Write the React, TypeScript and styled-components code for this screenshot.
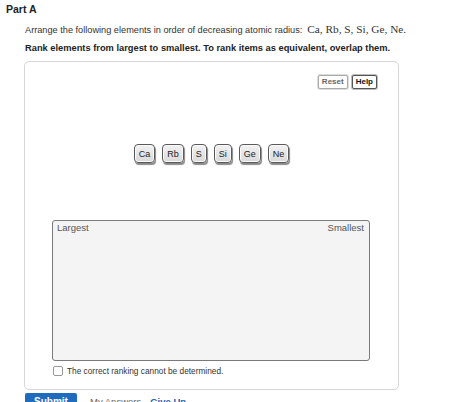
import React, { FC } from 'react';
import styled, { createGlobalStyle } from 'styled-components';

const GlobalStyle = createGlobalStyle`
  html, body {
    margin: 0;
    padding: 0;
    background: #ffffff;
  }
  body {
    font-family: "Liberation Sans", Arial, Helvetica, sans-serif;
    color: #222;
  }
`;

const elements = ['Ca', 'Rb', 'S', 'Si', 'Ge', 'Ne'];

const Page = styled.div`
  width: 474px;
  height: 402px;
  overflow: hidden;
  padding-top: 3px;
  box-sizing: border-box;
`;

const PartTitle = styled.div`
  margin-left: 6px;
  font-size: 10.5px;
  font-weight: bold;
  line-height: 12px;
  color: #222;
`;

const Prompt = styled.div`
  margin: 8px 0 0 25px;
  font-size: 9.2px;
  line-height: 13px;
  color: #333;
  white-space: nowrap;
`;

const Serif = styled.span`
  font-family: "Liberation Serif", "Times New Roman", serif;
  font-size: 11.3px;
  margin-left: 5px;
  color: #333;
`;

const Instruction = styled.div`
  margin: 5px 0 0 25px;
  font-size: 9.3px;
  font-weight: bold;
  line-height: 13px;
  color: #222;
  white-space: nowrap;
`;

const Panel = styled.div`
  margin: 6px 0 0 24px;
  width: 375px;
  height: 329px;
  box-sizing: border-box;
  border: 1px solid #d6d6d6;
  border-radius: 5px;
  display: flex;
  flex-direction: column;
`;

const Toolbar = styled.div`
  display: flex;
  justify-content: flex-end;
  gap: 4px;
  padding: 13px 21px 0 0;
`;

const ToolButton = styled.button<{ $strong?: boolean }>`
  height: 14px;
  padding: 0 3px;
  font-family: "Liberation Sans", Arial, sans-serif;
  font-size: 8px;
  font-weight: bold;
  line-height: 12px;
  color: ${(p) => (p.$strong ? '#111' : '#666')};
  background: #fff;
  border: 1px solid ${(p) => (p.$strong ? '#555' : '#aaa')};
  border-radius: 2px;
  box-shadow: 0 0 0 1px ${(p) => (p.$strong ? '#bbb' : '#ddd')};
`;

const TileRow = styled.div`
  display: flex;
  justify-content: center;
  gap: 7px;
  margin-top: 55px;
`;

const Tile = styled.div`
  height: 19px;
  min-width: 16px;
  padding: 0 4px;
  box-sizing: border-box;
  display: flex;
  align-items: center;
  justify-content: center;
  font-size: 9px;
  color: #222;
  background: linear-gradient(#f2f2f2, #d9d9d9);
  border: 1.5px solid #5a5a5a;
  border-radius: 4px;
  box-shadow: inset 0 0 0 1px #fafafa, 1px 2px 1px #8a8a8a;
`;

const RankBox = styled.div`
  margin: 57px 0 0 27px;
  width: 318px;
  height: 141px;
  box-sizing: border-box;
  background: #f4f4f4;
  border: 1.5px solid #7a7a7a;
  border-radius: 3px;
  display: flex;
  justify-content: space-between;
  align-items: flex-start;
  padding: 1px 5px 0 4px;
`;

const RankLabel = styled.span`
  font-size: 9.5px;
  line-height: 12px;
  color: #555;
`;

const CheckRow = styled.label`
  display: flex;
  align-items: center;
  gap: 4px;
  margin: 5px 0 0 28px;
  font-size: 8.3px;
  color: #333;
`;

const Box = styled.span`
  width: 8px;
  height: 8px;
  border: 1px solid #999;
  border-radius: 2px;
  background: #fff;
`;

const Footer = styled.div`
  display: flex;
  align-items: flex-start;
  margin: 3px 0 0 25px;
  gap: 13px;
`;

const SubmitButton = styled.button`
  width: 52px;
  height: 16px;
  padding: 1px 0 0;
  border: none;
  border-radius: 2px 2px 0 0;
  background: #1f6cbf;
  color: #fff;
  font-family: "Liberation Sans", Arial, sans-serif;
  font-size: 10px;
  font-weight: bold;
  line-height: 12px;
  text-align: center;
`;

const FooterLink = styled.span<{ $blue?: boolean }>`
  font-size: 9.5px;
  line-height: 12px;
  padding-top: 3px;
  font-weight: ${(p) => (p.$blue ? 'bold' : 'normal')};
  color: ${(p) => (p.$blue ? '#1f5fb0' : '#666')};
  margin-left: ${(p) => (p.$blue ? '-4px' : '0')};
`;

const App: FC = () => {
  return (
    <Page>
      <GlobalStyle />
      <PartTitle>Part A</PartTitle>
      <Prompt>
        Arrange the following elements in order of decreasing atomic radius:
        <Serif>Ca, Rb, S, Si, Ge, Ne.</Serif>
      </Prompt>
      <Instruction>
        Rank elements from largest to smallest. To rank items as equivalent, overlap them.
      </Instruction>
      <Panel>
        <Toolbar>
          <ToolButton>Reset</ToolButton>
          <ToolButton $strong>Help</ToolButton>
        </Toolbar>
        <TileRow>
          {elements.map((el) => (
            <Tile key={el}>{el}</Tile>
          ))}
        </TileRow>
        <RankBox>
          <RankLabel>Largest</RankLabel>
          <RankLabel>Smallest</RankLabel>
        </RankBox>
        <CheckRow>
          <Box />
          The correct ranking cannot be determined.
        </CheckRow>
      </Panel>
      <Footer>
        <SubmitButton>Submit</SubmitButton>
        <FooterLink>My Answers</FooterLink>
        <FooterLink $blue>Give Up</FooterLink>
      </Footer>
    </Page>
  );
};

export default App;
